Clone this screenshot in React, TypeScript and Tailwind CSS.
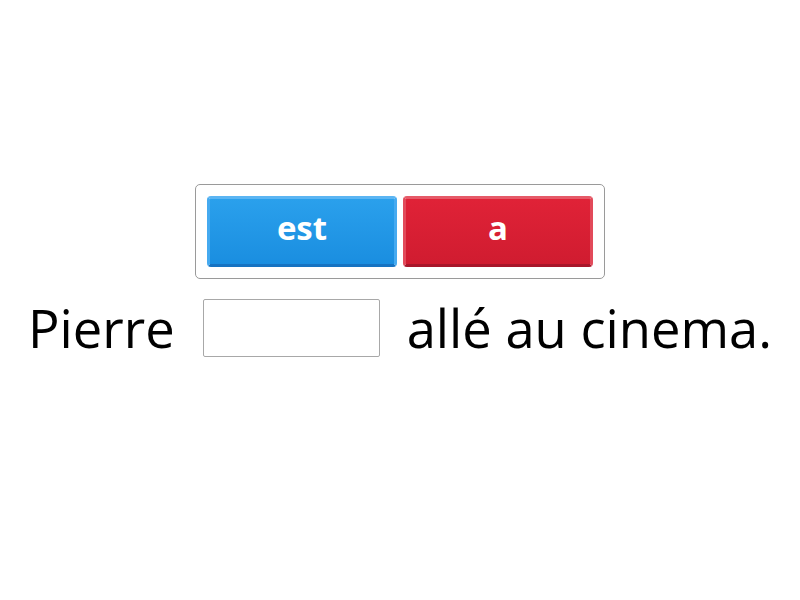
export default function App() {
  return (
    <div className="w-[800px] h-[600px] bg-white flex flex-col items-center pt-[184px]" style={{ fontFamily: '"Open Sans", sans-serif' }}>
      <div className="flex gap-[6px] p-[11px] border border-[#9a9a9a] rounded-[5px]">
        <div className="w-[190px] h-[71px] rounded-[4px] flex items-center justify-center pb-[7px] text-white font-bold text-[33px] border-[3px] border-t-[#5bb5f3] border-l-[#45aaf0] border-r-[#45aaf0] border-b-[#1673c2] bg-gradient-to-b from-[#2aa0ec] to-[#1a8ee0]">
          est
        </div>
        <div className="w-[190px] h-[71px] rounded-[4px] flex items-center justify-center pb-[7px] text-white font-bold text-[33px] border-[3px] border-t-[#e65a68] border-l-[#e24a5a] border-r-[#e24a5a] border-b-[#a8162a] bg-gradient-to-b from-[#e02237] to-[#d01c30]">
          a
        </div>
      </div>
      <div className="flex items-center mt-[13px] text-[52.5px] text-black leading-[71px]">
        <span>Pierre</span>
        <div className="w-[177px] h-[58px] ml-[28px] mr-[27px] border border-[#a8a8a8] rounded-[2px] bg-white" />
        <span>allé au cinema.</span>
      </div>
    </div>
  );
}
